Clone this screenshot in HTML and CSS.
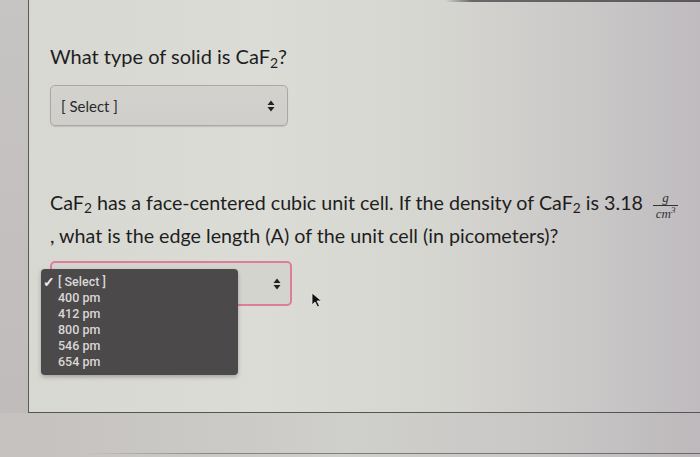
FILE: index.html
```html
<!DOCTYPE html>
<html>
<head>
<meta charset="utf-8">
<link rel="stylesheet" href="styles.css">
</head>
<body>
<div class="screen">
  <div class="top">
    <div class="gutter"></div>
    <div class="panel">
      <div class="q1">What type of solid is CaF<sub>2</sub>?</div>
      <div class="select s1">
        <span class="sel-text">[ Select ]</span>
        <svg class="arrows" width="8" height="12" viewBox="0 0 8 12"><path d="M4 0.5 L7.5 5 L0.5 5 Z M4 11.5 L7.5 7 L0.5 7 Z" fill="#222"/></svg>
      </div>
      <p class="q2">CaF<sub>2</sub> has a face-centered cubic unit cell. If the density of CaF<sub>2</sub> is 3.18 <span class="frac"><span class="num">g</span><span class="den">cm<sup>3</sup></span></span><br>, what is the edge length (A) of the unit cell (in picometers)?</p>
      <div class="select s2">
        <svg class="arrows" width="8" height="12" viewBox="0 0 8 12"><path d="M4 0.5 L7.5 5 L0.5 5 Z M4 11.5 L7.5 7 L0.5 7 Z" fill="#222"/></svg>
        <ul class="menu">
          <li class="checked"><span class="check">✓</span>[ Select ]</li>
          <li>400 pm</li>
          <li>412 pm</li>
          <li>800 pm</li>
          <li>546 pm</li>
          <li>654 pm</li>
        </ul>
        <svg class="cursor" width="12" height="16" viewBox="0 0 12 16"><path d="M1 1 L1 13 L4 10 L6.5 15 L8.5 14 L6 9 L10.5 9 Z" fill="#111" stroke="#eee" stroke-width="0.8"/></svg>
      </div>
    </div>
  </div>
  <div class="footer"></div>
</div>
</body>
</html>
```
FILE: styles.css
```css
html, body {
  margin: 0;
  padding: 0;
  width: 700px;
  height: 457px;
  overflow: hidden;
}
body {
  background: #c6c3c1;
}
.screen {
  display: flex;
  flex-direction: column;
  width: 700px;
  height: 457px;
  background: linear-gradient(90deg, #c4c1bf 0%, #cbc9c6 30%, #cfcfcb 50%, #c9c7c6 78%, #bdb9bc 100%);
}
.top {
  display: flex;
  height: 413px;
  flex: none;
}
.gutter {
  width: 28px;
  flex: none;
  background: linear-gradient(180deg, #c7c5c3 0%, #c2bfbe 60%, #bfbcbb 100%);
}
.panel {
  flex: 1;
  box-sizing: border-box;
  padding: 43px 0 0 21px;
  border-left: 1px solid #5a5a5a;
  border-bottom: 1px solid #555;
  position: relative;
  font-family: Lato, "Liberation Sans", sans-serif;
  color: #1e1e1e;
  background:
    linear-gradient(90deg, transparent 0%, transparent 62%, #6a676a 66%, #5a575a 100%) top / 100% 2px no-repeat,
    linear-gradient(90deg, #d8d8d2 0%, #dcdcd6 35%, #d6d6d1 60%, #cbc9c8 82%, #bfbbbf 100%);
}
.q1 {
  font-size: 20px;
  line-height: 26px;
}
.q1 sub, .q2 sub {
  font-size: 0.7em;
  line-height: 0;
  vertical-align: -0.25em;
}
.select {
  position: relative;
  display: flex;
  align-items: center;
  box-sizing: border-box;
  border-radius: 5px;
}
.s1 {
  margin-top: 16px;
  width: 238px;
  height: 41px;
  padding: 0 10px 0 10px;
  border: 1px solid #a9a8a6;
  background: linear-gradient(180deg, #d3d2cf 0%, #cfcecb 100%);
  box-shadow: 0 1px 1px rgba(0,0,0,0.12);
}
.sel-text {
  font-size: 15px;
  color: #2a2a2a;
  flex: 1;
}
.arrows {
  flex: none;
}
.s1 .arrows {
  margin-right: 2px;
}
.q2 {
  margin: 60px 0 0 0;
  font-size: 19.7px;
  line-height: 33px;
}
.frac {
  display: inline-flex;
  flex-direction: column;
  align-items: center;
  vertical-align: 8px;
  font-family: "Liberation Serif", serif;
  font-style: italic;
  font-size: 13px;
  line-height: 11px;
  color: #333;
  margin-left: 5px;
}
.num {
  padding-bottom: 2px;
  border-bottom: 1px solid #333;
  width: 25px;
  text-align: center;
}
.den {
  padding-top: 2px;
}
.den sup {
  font-size: 9px;
  line-height: 0;
  vertical-align: 5px;
}
.s2 {
  margin-top: 9px;
  width: 242px;
  height: 45px;
  border: 2px solid #de7d9b;
  background: #d4d4cf;
  justify-content: flex-end;
  padding-right: 9px;
}
.menu {
  position: absolute;
  left: -11px;
  top: 6px;
  width: 197px;
  height: 106px;
  box-sizing: border-box;
  margin: 0;
  padding: 5px 0 0 17px;
  list-style: none;
  background: #4b4949;
  border-radius: 4px;
  box-shadow: 0 2px 4px rgba(0,0,0,0.25);
  font-family: Roboto, "Liberation Sans", sans-serif;
  font-weight: 500;
  font-size: 12.5px;
  line-height: 16px;
  color: #d9d7d7;
}
.menu li {
  position: relative;
}
.check {
  position: absolute;
  left: -15px;
  font-size: 14px;
  font-weight: 700;
  color: #ececec;
}
.cursor {
  position: absolute;
  left: 259px;
  top: 29px;
}
.footer {
  height: 41px;
  flex: none;
  background: linear-gradient(90deg, transparent 0%, transparent 12%, #888 30%, #6a6868 100%) 0 40px / 100% 1px no-repeat;
}
```
